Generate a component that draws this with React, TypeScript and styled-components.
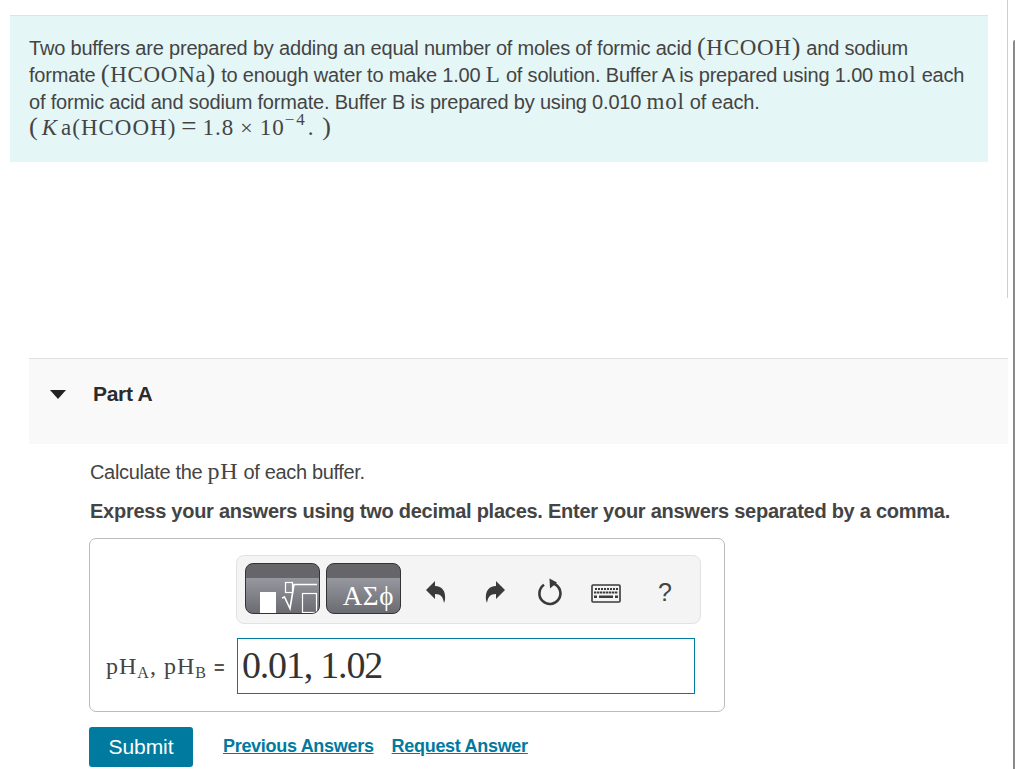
import React from "react";
import styled, { createGlobalStyle } from "styled-components";

const GlobalStyle = createGlobalStyle`
  html, body {
    margin: 0;
    padding: 0;
    height: 769px;
    overflow: hidden;
    background: #fff;
    font-family: "Liberation Sans", Arial, sans-serif;
    color: #444;
  }
`;

const Page = styled.div`
  position: relative;
  width: 1015px;
  height: 769px;
  overflow: hidden;
  padding-top: 15px;
  box-sizing: border-box;
`;

const Stem = styled.div`
  margin-left: 10px;
  width: 978px;
  height: 147px;
  box-sizing: border-box;
  border-top: 1px solid #dde3e6;
  background: #e5f6f7;
  padding: 18px 19px 0;
  font-size: 20px;
  line-height: 27px;
  letter-spacing: -0.19px;
`;

const StemLine = styled.div`
  white-space: nowrap;
  height: 27px;
`;

const FormulaLine = styled(StemLine)`
  margin-top: -1px;
`;

const M = styled.span<{ $size?: number }>`
  font-family: "Liberation Serif", "Times New Roman", serif;
  font-size: ${(p) => p.$size ?? 23}px;
  letter-spacing: 0.7px;
`;

const Formula = styled(M)`
  font-size: 23px;
  letter-spacing: 1px;
  word-spacing: 1px;
`;

const Paren = styled.span`
  font-family: "Liberation Serif", serif;
  font-size: 26px;
  font-weight: 400;
  line-height: 0;
`;

const Italic = styled.i`
  margin: 0 2px 0 3px;
  letter-spacing: 2px;
`;

const Operator = styled.span<{ $size: number; $gap: number }>`
  margin: 0 ${(p) => p.$gap}px;
  font-size: ${(p) => p.$size}px;
  line-height: 0;
`;

const Sup = styled.sup`
  font-size: 17px;
  line-height: 0;
  vertical-align: 10px;
  letter-spacing: 2px;
  margin-right: 1px;
`;

const Sub = styled.sub`
  font-size: 16px;
  line-height: 0;
  vertical-align: -4px;
`;

const PartHeader = styled.div`
  margin: 196px 0 0 29px;
  width: 979px;
  height: 86px;
  box-sizing: border-box;
  border-top: 1px solid #e0e0e0;
  background: #f9f9f9;
  display: flex;
  align-items: flex-start;
  padding: 24px 0 0 21px;
  gap: 27px;
`;

const Caret = styled.span`
  margin-top: 7px;
  width: 0;
  height: 0;
  border-left: 8px solid transparent;
  border-right: 8px solid transparent;
  border-top: 9px solid #222;
`;

const PartTitle = styled.div`
  font-size: 21px;
  line-height: 22px;
  font-weight: 700;
  color: #2b2b2b;
  letter-spacing: -0.3px;
`;

const PartBody = styled.div`
  margin-left: 90px;
  width: 880px;
`;

const Prompt = styled.div`
  margin-top: 14px;
  font-size: 20px;
  line-height: 26px;
  letter-spacing: -0.34px;
`;

const Instruction = styled.div`
  margin-top: 13px;
  font-size: 20px;
  line-height: 26px;
  font-weight: 700;
  letter-spacing: -0.26px;
  white-space: nowrap;
`;

const AnswerBox = styled.div`
  margin: 14px 0 0 -1px;
  width: 636px;
  height: 174px;
  box-sizing: border-box;
  border: 1px solid #bbb;
  border-radius: 7px;
  padding: 16px 23px 0 16px;
`;

const Toolbar = styled.div`
  margin-left: 130px;
  width: 465px;
  height: 69px;
  box-sizing: border-box;
  border: 1px solid #e2e2e2;
  border-radius: 8px;
  background: #f4f4f4;
  display: flex;
  align-items: flex-start;
  padding: 7px 0 0 8px;
  gap: 6px;
`;

const TemplateButton = styled.div`
  position: relative;
  width: 75px;
  height: 51px;
  box-sizing: border-box;
  border: 1px solid #333;
  border-radius: 8px;
  overflow: hidden;
  background: linear-gradient(#66666a 0 14px, #97979f 14px, #6b6b72 100%);
  color: #fff;
  display: flex;
  justify-content: flex-end;
  align-items: flex-end;
`;

const SymbolText = styled.span`
  font-family: "Liberation Serif", serif;
  font-size: 27px;
  line-height: 33px;
  margin-right: 6px;
  letter-spacing: 0.6px;
`;

const ToolIcons = styled.div`
  display: flex;
  align-items: center;
  height: 51px;
  margin: 3px 0 0 18px;
  color: #3a3a3a;
`;

const IconSlot = styled.span<{ $w: number; $drop?: number }>`
  width: ${(p) => p.$w}px;
  margin-top: ${(p) => p.$drop ?? 0}px;
  display: flex;
  justify-content: center;
  align-items: center;
`;

const Help = styled.span`
  font-size: 25px;
  line-height: 26px;
  color: #444;
`;

const AnswerRow = styled.div`
  margin-top: 14px;
  display: flex;
  align-items: center;
  gap: 6px;
`;

const AnswerLabel = styled.div`
  width: 125px;
  white-space: nowrap;
  display: flex;
  align-items: baseline;
`;

const LabelMath = styled(M)`
  font-size: 24px;
  letter-spacing: 1px;
`;

const Equals = styled.span`
  font-size: 18px;
  font-weight: 700;
  color: #555;
  margin-left: 7px;
`;

const AnswerInput = styled.div`
  width: 458px;
  height: 56px;
  box-sizing: border-box;
  border: 1px solid #007c9e;
  padding-left: 4px;
  font-family: "Liberation Serif", serif;
  font-size: 38px;
  line-height: 52px;
  color: #333;
  letter-spacing: -1.2px;
`;

const Actions = styled.div`
  margin: 15px 0 0 -1px;
  display: flex;
  align-items: center;
`;

const SubmitButton = styled.button`
  width: 104px;
  height: 40px;
  border: 0;
  border-radius: 3px;
  background: #007a9e;
  color: #fff;
  font-family: inherit;
  font-size: 21px;
  letter-spacing: -0.1px;
  padding: 0;
  margin-right: 30px;
`;

const ActionLink = styled.a`
  color: #007a9e;
  font-size: 18px;
  font-weight: 700;
  text-decoration: underline;
  letter-spacing: -0.3px;
  margin: -2px 18px 0 0;
`;

const PanelEdge = styled.div`
  position: absolute;
  top: 0;
  left: 1007px;
  width: 1px;
  height: 298px;
  background: #c5d0de;
`;

const ScrollEdge = styled.div`
  position: absolute;
  top: 40px;
  left: 1013px;
  width: 2px;
  height: 729px;
  background: #8a8a8a;
  border-top-left-radius: 2px;
`;

const TemplateGlyph = () => (
  <svg width="73" height="49" viewBox="0 0 73 49">
    <rect x="14" y="28" width="16" height="21" fill="#fff" />
    <g fill="none" stroke="#fff">
      <rect x="39.5" y="18.5" width="7" height="10" strokeWidth="1.2" />
      <path d="M36 34 l2.5 -1 l5.5 11.5 l4 -24 h23" strokeWidth="1.6" />
      <rect x="56.5" y="29.5" width="14" height="19" strokeWidth="1.2" />
    </g>
  </svg>
);

const UndoIcon = () => (
  <svg width="22" height="24" viewBox="0 0 22 24">
    <path d="M1 10 L10 1 V6 C17 6 21 11 20 20 L19 23 C18 17 16 14 10 14 V19 Z" fill="currentColor" />
  </svg>
);

const RedoIcon = () => (
  <svg width="22" height="24" viewBox="0 0 22 24">
    <path d="M21 10 L12 1 V6 C5 6 1 11 2 20 L3 23 C4 17 6 14 12 14 V19 Z" fill="currentColor" />
  </svg>
);

const ResetIcon = () => (
  <svg width="26" height="28" viewBox="0 0 26 28">
    <path d="M17 5.8 A10.5 10.5 0 1 1 7 6.8" fill="none" stroke="currentColor" strokeWidth="2.6" />
    <path d="M12.5 0.5 L20 4.5 L13 10.5 Z" fill="currentColor" />
  </svg>
);

const KeyboardIcon = () => (
  <svg width="30" height="19" viewBox="0 0 30 19">
    <rect x="1" y="1" width="28" height="17" rx="1" fill="#f4f4f4" stroke="currentColor" strokeWidth="1.6" />
    {[4, 7, 10, 13, 16, 19, 22, 25].map((x) => (
      <rect key={x} x={x} y="4" width="2" height="2" fill="currentColor" />
    ))}
    {[3, 6, 9, 12, 15, 18, 21, 24].map((x) => (
      <rect key={x} x={x} y="7.5" width="2.4" height="2" fill="currentColor" />
    ))}
    <rect x="3" y="11.5" width="3" height="2.5" fill="currentColor" />
    <rect x="8" y="11.5" width="14" height="2.5" fill="currentColor" />
    <rect x="24" y="11.5" width="3" height="2.5" fill="currentColor" />
  </svg>
);

export default function App() {
  return (
    <Page>
      <GlobalStyle />
      <Stem>
        <StemLine>
          Two buffers are prepared by adding an equal number of moles of formic acid{" "}
          <M><Paren>(</Paren>HCOOH<Paren>)</Paren></M> and sodium
        </StemLine>
        <StemLine>
          formate <M><Paren>(</Paren>HCOONa<Paren>)</Paren></M> to enough water to make 1.00 <M>L</M> of solution. Buffer A is
          prepared using 1.00 <M>mol</M> each
        </StemLine>
        <StemLine>
          of formic acid and sodium formate. Buffer B is prepared by using 0.010 <M>mol</M> of each.
        </StemLine>
        <FormulaLine>
          <Formula>
            <Paren>(</Paren><Italic>K</Italic>a(HCOOH)
            <Operator $size={27} $gap={5}>=</Operator>1.8
            <Operator $size={22} $gap={6}>×</Operator>10<Sup>−4</Sup>. <Paren>)</Paren>
          </Formula>
        </FormulaLine>
      </Stem>

      <PartHeader>
        <Caret />
        <PartTitle>Part A</PartTitle>
      </PartHeader>

      <PartBody>
        <Prompt>
          Calculate the <M $size={24}>pH</M> of each buffer.
        </Prompt>
        <Instruction>
          Express your answers using two decimal places. Enter your answers separated by a comma.
        </Instruction>

        <AnswerBox>
          <Toolbar>
            <TemplateButton>
              <TemplateGlyph />
            </TemplateButton>
            <TemplateButton>
              <SymbolText>ΑΣϕ</SymbolText>
            </TemplateButton>
            <ToolIcons>
              <IconSlot $w={22}><UndoIcon /></IconSlot>
              <IconSlot $w={37} />
              <IconSlot $w={22}><RedoIcon /></IconSlot>
              <IconSlot $w={31} />
              <IconSlot $w={26}><ResetIcon /></IconSlot>
              <IconSlot $w={28} />
              <IconSlot $w={30} $drop={4}><KeyboardIcon /></IconSlot>
              <IconSlot $w={35} />
              <IconSlot $w={18}><Help>?</Help></IconSlot>
            </ToolIcons>
          </Toolbar>
          <AnswerRow>
            <AnswerLabel>
              <LabelMath>pH<Sub>A</Sub>, pH<Sub>B</Sub></LabelMath>
              <Equals>=</Equals>
            </AnswerLabel>
            <AnswerInput>0.01, 1.02</AnswerInput>
          </AnswerRow>
        </AnswerBox>

        <Actions>
          <SubmitButton>Submit</SubmitButton>
          <ActionLink>Previous Answers</ActionLink>
          <ActionLink>Request Answer</ActionLink>
        </Actions>
      </PartBody>

      <PanelEdge />
      <ScrollEdge />
    </Page>
  );
}
